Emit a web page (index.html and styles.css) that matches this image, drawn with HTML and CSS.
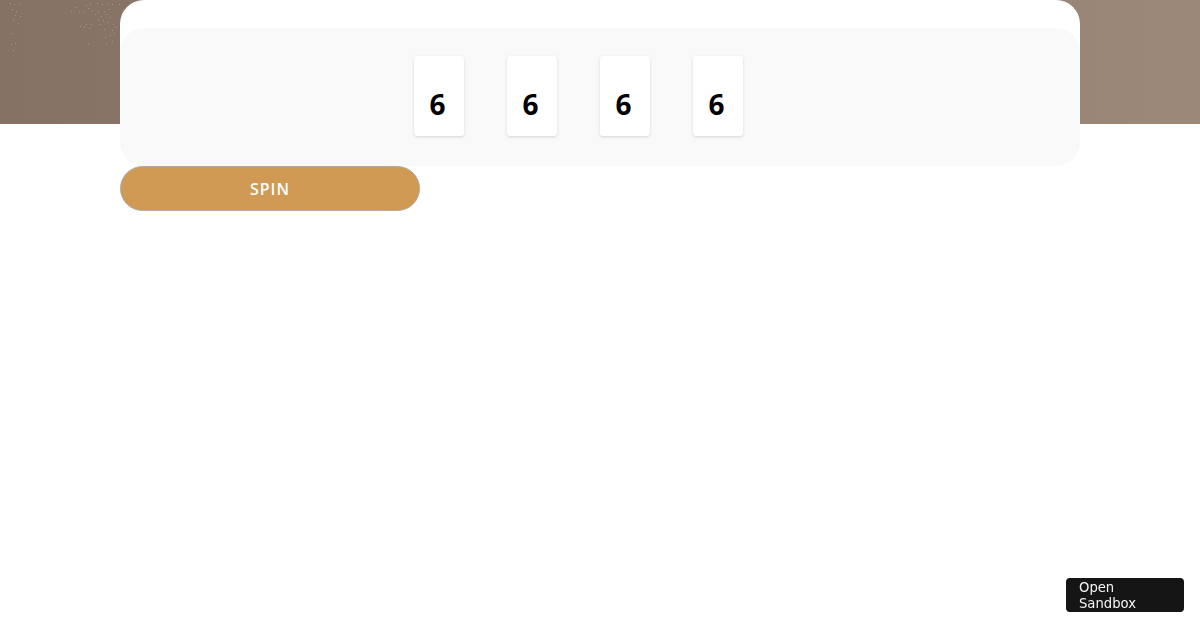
FILE: index.html
```
<!DOCTYPE html>
<html lang="en">
<head>
    <meta charset="UTF-8">
    <meta name="viewport" content="width=device-width, initial-scale=1.0">
    <title>Slot Machine</title>
    <link rel="stylesheet" href="styles.css">
</head>
<body>
    <div class="page">
        <!-- light specks in the photo behind the game -->
        <svg class="specks" width="120" height="52" viewBox="0 0 120 52">
            <path d="M10 3h1v1h-1zM14 4h1v1h-1zM19 3h1v1h-1zM12 9h1v1h-1zM16 11h1v1h-1zM15 15h1v1h-1zM20 16h1v1h-1zM13 19h1v1h-1zM18 23h1v1h-1zM12 33h1v1h-1zM11 44h1v1h-1zM15 43h1v1h-1zM13 50h1v1h-1zM71 11h1v1h-1zM75 7h1v1h-1zM79 11h1v1h-1zM83 12h1v1h-1zM86 5h1v1h-1zM90 4h1v1h-1zM88 8h1v1h-1zM92 10h1v1h-1zM97 3h1v1h-1zM102 4h1v1h-1zM107 3h1v1h-1zM112 4h1v1h-1zM119 4h1v1h-1zM98 12h1v1h-1zM104 11h1v1h-1zM109 9h1v1h-1zM95 14h1v1h-1zM101 16h1v1h-1zM106 14h1v1h-1zM110 17h1v1h-1zM98 19h1v1h-1zM103 20h1v1h-1zM108 22h1v1h-1zM113 24h1v1h-1zM86 24h1v1h-1zM91 24h1v1h-1zM80 26h1v1h-1zM84 27h1v1h-1zM89 28h1v1h-1zM99 24h1v1h-1zM104 29h1v1h-1zM112 30h1v1h-1zM116 27h1v1h-1zM110 35h1v1h-1zM114 33h1v1h-1zM105 37h1v1h-1zM112 41h1v1h-1zM88 44h1v1h-1zM106 44h1v1h-1z" fill="#a5988c"/>
        </svg>
        <div class="game">
            <div class="reels">
                <div class="reel">6</div>
                <div class="reel">6</div>
                <div class="reel">6</div>
                <div class="reel">6</div>
            </div>
            <button class="spin">SPIN</button>
        </div>
    </div>

    <a class="sandbox-link">Open Sandbox</a>
</body>
</html>
```

FILE: styles.css
```
html, body {
    height: 100%;
}

body {
    margin: 0;
    font-family: 'Open Sans', sans-serif;
    background-color: #fff;
    overflow: hidden;
}

.page {
    position: relative;
    height: 100%;
    box-sizing: border-box;
    padding: 0 120px;
    background: linear-gradient(90deg, #857264 0%, #8f7c6d 50%, #9d897a 100%) top left / 100% 124px no-repeat;
}

.specks {
    position: absolute;
    top: 0;
    left: 0;
}

.game {
    position: relative;
    background-color: #fff;
    border-radius: 24px 24px 0 0;
    padding-top: 28px;
    height: 100%;
    box-sizing: border-box;
}

.reels {
    display: flex;
    gap: 43px;
    height: 138px;
    box-sizing: border-box;
    padding: 28px 0 0 294px;
    background-color: #f9f9f9;
    border-radius: 24px;
}

.reel {
    width: 50px;
    height: 80px;
    box-sizing: border-box;
    padding: 28px 3px 0 0;
    background-color: #fff;
    border-radius: 3px;
    box-shadow: 0 1px 3px rgba(0, 0, 0, 0.15);
    font-size: 28px;
    font-weight: 700;
    line-height: 40px;
    text-align: center;
    color: #000;
}

.spin {
    display: block;
    width: 300px;
    height: 45px;
    padding: 0;
    border: 1px solid #b0aba5;
    border-radius: 23px;
    background-color: #d19a54;
    color: #fff;
    font-family: 'Open Sans', sans-serif;
    font-size: 16px;
    font-weight: 600;
    letter-spacing: 1px;
}

.sandbox-link {
    position: fixed;
    right: 16px;
    bottom: 18px;
    width: 118px;
    height: 34px;
    box-sizing: border-box;
    padding: 2px 13px;
    background-color: #151515;
    border-radius: 4px;
    color: #f5f5f5;
    font-family: 'DejaVu Sans', sans-serif;
    font-size: 13.2px;
    line-height: 16px;
}
```
